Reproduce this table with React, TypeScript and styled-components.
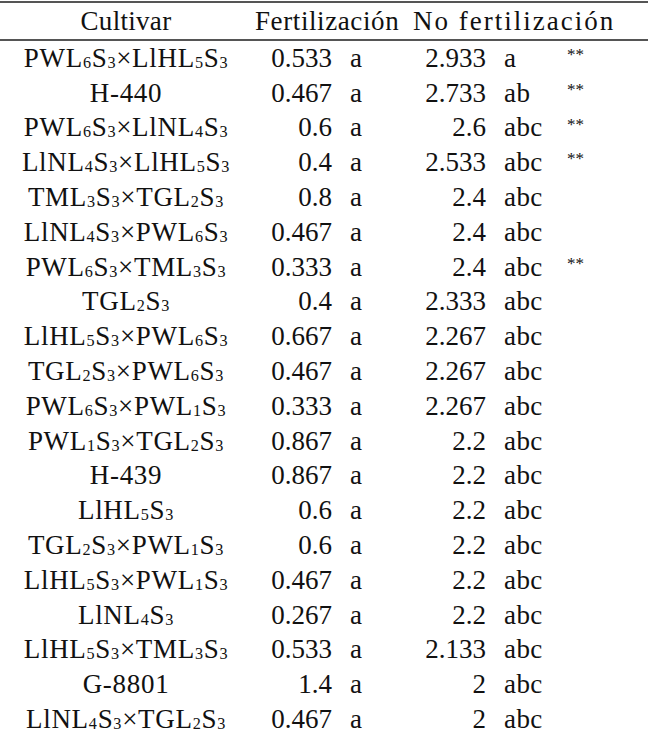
import React, { FC } from 'react';
import styled, { createGlobalStyle } from 'styled-components';

const GlobalStyle = createGlobalStyle`
  html, body {
    margin: 0;
    padding: 0;
    background: #ffffff;
  }
`;

const COLUMNS = '252px 80px 74px 80px 81px 1fr';

const Table = styled.div`
  width: 648px;
  padding-top: 1px;
  font-family: 'Liberation Serif', 'Times New Roman', serif;
  font-size: 27px;
  line-height: 1;
  color: #111111;
`;

const HeaderRow = styled.div`
  display: grid;
  grid-template-columns: ${COLUMNS};
  align-items: center;
  height: 36px;
  border-top: 2px solid #555;
  border-bottom: 2px solid #555;
`;

const HeadCell = styled.div<{ $span?: string; $offset?: number; $center?: boolean; $spacing?: number }>`
  grid-column: ${(p) => p.$span || 'auto'};
  padding-left: ${(p) => p.$offset || 0}px;
  text-align: ${(p) => (p.$center ? 'center' : 'left')};
  letter-spacing: ${(p) => p.$spacing || 0}px;
  white-space: nowrap;
`;

const Row = styled.div`
  display: grid;
  grid-template-columns: ${COLUMNS};
  align-items: center;
  height: 34.8px;
  white-space: nowrap;
`;

const Name = styled.div`
  text-align: center;
  letter-spacing: 0.7px;
`;

const Value = styled.div`
  text-align: right;
`;

const Letter = styled.div`
  padding-left: 18px;
  letter-spacing: 0.4px;
`;

const Stars = styled.div`
  align-self: start;
  padding-top: 5px;
  font-size: 17px;
  color: #111;
`;

const Sub = styled.span`
  font-size: 0.6em;
  vertical-align: -0.04em;
`;

type Entry = [string, string, string, string, string, boolean?];

const rows: Entry[] = [
  ['PWL_6S_3×LlHL_5S_3', '0.533', 'a', '2.933', 'a', true],
  ['H-440', '0.467', 'a', '2.733', 'ab', true],
  ['PWL_6S_3×LlNL_4S_3', '0.6', 'a', '2.6', 'abc', true],
  ['LlNL_4S_3×LlHL_5S_3', '0.4', 'a', '2.533', 'abc', true],
  ['TML_3S_3×TGL_2S_3', '0.8', 'a', '2.4', 'abc'],
  ['LlNL_4S_3×PWL_6S_3', '0.467', 'a', '2.4', 'abc'],
  ['PWL_6S_3×TML_3S_3', '0.333', 'a', '2.4', 'abc', true],
  ['TGL_2S_3', '0.4', 'a', '2.333', 'abc'],
  ['LlHL_5S_3×PWL_6S_3', '0.667', 'a', '2.267', 'abc'],
  ['TGL_2S_3×PWL_6S_3', '0.467', 'a', '2.267', 'abc'],
  ['PWL_6S_3×PWL_1S_3', '0.333', 'a', '2.267', 'abc'],
  ['PWL_1S_3×TGL_2S_3', '0.867', 'a', '2.2', 'abc'],
  ['H-439', '0.867', 'a', '2.2', 'abc'],
  ['LlHL_5S_3', '0.6', 'a', '2.2', 'abc'],
  ['TGL_2S_3×PWL_1S_3', '0.6', 'a', '2.2', 'abc'],
  ['LlHL_5S_3×PWL_1S_3', '0.467', 'a', '2.2', 'abc'],
  ['LlNL_4S_3', '0.267', 'a', '2.2', 'abc'],
  ['LlHL_5S_3×TML_3S_3', '0.533', 'a', '2.133', 'abc'],
  ['G-8801', '1.4', 'a', '2', 'abc'],
  ['LlNL_4S_3×TGL_2S_3', '0.467', 'a', '2', 'abc'],
];

// "_6" marks a subscript digit
const CultivarName: FC<{ code: string }> = ({ code }) => {
  const parts = code.split(/_(\d)/);
  return (
    <Name>
      {parts.map((p, i) => (i % 2 ? <Sub key={i}>{p}</Sub> : <React.Fragment key={i}>{p}</React.Fragment>))}
    </Name>
  );
};

export default function App() {
  return (
    <>
      <GlobalStyle />
      <Table>
        <HeaderRow>
          <HeadCell $center $spacing={0.3}>
            Cultivar
          </HeadCell>
          <HeadCell $span="2 / 4" $offset={3} $spacing={0.6}>
            Fertilización
          </HeadCell>
          <HeadCell $span="4 / 7" $offset={7} $spacing={2}>
            No fertilización
          </HeadCell>
        </HeaderRow>
        {rows.map(([code, f, fl, n, nl, sig]) => (
          <Row key={code}>
            <CultivarName code={code} />
            <Value>{f}</Value>
            <Letter>{fl}</Letter>
            <Value>{n}</Value>
            <Letter>{nl}</Letter>
            <Stars>{sig ? '**' : ''}</Stars>
          </Row>
        ))}
      </Table>
    </>
  );
}
